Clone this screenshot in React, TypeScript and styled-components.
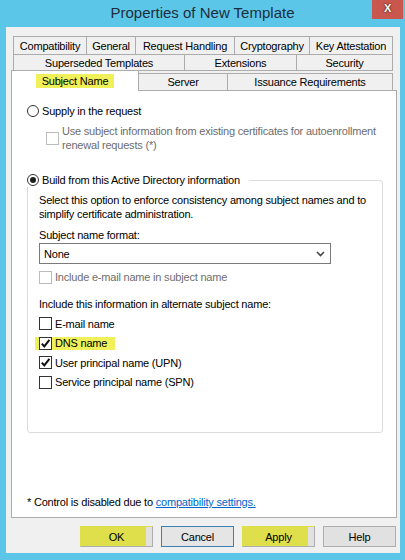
import React from "react";
import styled, { createGlobalStyle, css } from "styled-components";

const Global = createGlobalStyle`
  html, body { margin: 0; padding: 0; background: #5cc6e9; }
  body { font-family: "Liberation Sans", Arial, sans-serif; }
  * { box-sizing: border-box; }
`;

const HL_TEXT = "#f0f05a";
const HL_BTN = "#dfdf4c";

const Window = styled.div`
  width: 405px;
  height: 560px;
  background: #5cc6e9;
  display: flex;
  flex-direction: column;
  overflow: hidden;
  font-size: 11px;
  letter-spacing: -0.2px;
  color: #000;
`;

const TitleBar = styled.div`
  height: 27px;
  flex: none;
  display: grid;
  grid-template-columns: 1fr auto 1fr;
  align-items: start;
`;

const Title = styled.div`
  grid-column: 2;
  font-size: 15px;
  letter-spacing: 0;
  line-height: 25px;
  color: #1f2e3c;
  white-space: nowrap;
`;

const CloseButton = styled.div`
  grid-column: 3;
  justify-self: end;
  margin-right: 2px;
  width: 31px;
  height: 19px;
  background: #c9574d;
  color: #fff;
  font-weight: bold;
  font-size: 11px;
  display: flex;
  align-items: center;
  justify-content: center;
  padding-bottom: 3px;
  text-shadow: 0 0 2px #4a1510, 0 0 1px #4a1510;
`;

const Client = styled.div`
  flex: none;
  height: 526px;
  margin: 0 5px 0 6px;
  background: #f0f0f0;
  padding: 9px 3px 0 5px;
  display: flex;
  flex-direction: column;
`;

const TabRow = styled.div<{ $h: number; $front?: boolean }>`
  display: flex;
  align-items: flex-end;
  height: ${(p) => p.$h}px;
  margin-left: ${(p) => (p.$front ? 0 : 2)}px;
  & + & {
    margin-top: -1px;
  }
`;

const Tab = styled.div<{ $w: number; $h: number; $selected?: boolean; $open?: boolean }>`
  width: ${(p) => p.$w}px;
  height: ${(p) => p.$h}px;
  flex: none;
  border: 1px solid #acacac;
  background: #f0f0f0;
  display: flex;
  align-items: center;
  justify-content: center;
  white-space: nowrap;
  & + & {
    margin-left: -1px;
  }
  ${(p) =>
    p.$open &&
    css`
      border-bottom: none;
    `}
  ${(p) =>
    p.$selected &&
    css`
      position: relative;
      z-index: 1;
      background: #fff;
      border-bottom: none;
      margin-bottom: -1px;
      align-items: flex-start;
      padding-top: 3px;
    `}
`;

const Mark = styled.span`
  background: ${HL_TEXT};
  padding: 1px 6px;
  line-height: 12px;
`;

const Panel = styled.div`
  height: 428px;
  flex: none;
  background: #fff;
  border: 1px solid #acacac;
  padding: 13px 13px 8px 15px;
  display: flex;
  flex-direction: column;
`;

const OptionRow = styled.div`
  display: flex;
  align-items: center;
  height: 14px;
  gap: 3px;
  white-space: nowrap;
`;

const RadioCircle = styled.span<{ $checked?: boolean }>`
  width: 12px;
  height: 12px;
  flex: none;
  border-radius: 50%;
  border: 1px solid #333;
  background: #fff;
  display: flex;
  align-items: center;
  justify-content: center;
  &::after {
    content: "";
    width: 6px;
    height: 6px;
    border-radius: 50%;
    background: ${(p) => (p.$checked ? "#1e1e1e" : "transparent")};
  }
`;

const Box = styled.span<{ $disabled?: boolean }>`
  width: 13px;
  height: 13px;
  flex: none;
  border: 1px solid ${(p) => (p.$disabled ? "#bcbcbc" : "#333")};
  background: #fff;
  display: flex;
  align-items: center;
  justify-content: center;
`;

const SubOption = styled.div<{ $indent?: number }>`
  margin-top: 6px;
  margin-left: ${(p) => p.$indent ?? 0}px;
  display: flex;
  align-items: center;
  gap: 3px;
`;

const Dim = styled.span`
  color: #6d6d6d;
  line-height: 14px;
`;

const Group = styled.fieldset`
  margin: 21px 0 0 0;
  border: 1px solid #dcdcdc;
  border-radius: 3px;
  padding: 6px 12px 40px 11px;
  min-width: 0;
`;

const Legend = styled.legend`
  padding: 0 9px 0 0;
  margin-left: -12px;
  background: #fff;
`;

const Para = styled.div<{ $mt?: number }>`
  line-height: 14px;
  margin-top: ${(p) => p.$mt ?? 0}px;
`;

const Select = styled.div`
  margin-top: 1px;
  width: 292px;
  height: 21px;
  border: 1px solid #7a7a7a;
  background: #fff;
  display: flex;
  align-items: center;
  justify-content: space-between;
  padding: 0 5px 0 4px;
`;

const CheckRow = styled.div`
  display: flex;
  align-items: center;
  height: 19.5px;
`;

const CheckInner = styled.span<{ $highlight?: boolean }>`
  display: inline-flex;
  align-items: center;
  gap: 3px;
  height: 13px;
  white-space: nowrap;
  ${(p) =>
    p.$highlight &&
    css`
      background: ${HL_TEXT};
      margin-left: -4px;
      padding: 0 8px 0 4px;
    `}
`;

const CheckList = styled.div`
  margin-top: 3px;
  display: flex;
  flex-direction: column;
`;

const Footnote = styled.div`
  margin-top: auto;
  line-height: 14px;
  white-space: nowrap;
`;

const Link = styled.a`
  color: #0066cc;
  text-decoration: underline;
`;

const ButtonRow = styled.div`
  margin-top: 8px;
  margin-right: 1px;
  display: flex;
  justify-content: flex-end;
  gap: 8px;
`;

const Button = styled.div<{ $variant?: "hl" | "default" }>`
  width: 73px;
  height: 21px;
  border: 1px solid #adadad;
  background: #e1e1e1;
  display: flex;
  align-items: center;
  justify-content: center;
  ${(p) =>
    p.$variant === "hl" &&
    css`
      background: linear-gradient(to right, ${HL_BTN} 0, ${HL_BTN} 92%, #e1e1e1 92%);
      border-top-color: ${HL_BTN};
      border-left-color: ${HL_BTN};
    `}
  ${(p) =>
    p.$variant === "default" &&
    css`
      border-color: #3c7fb1;
      background: #e5e5e5;
    `}
`;

const Check = () => (
  <svg width="11" height="11" viewBox="0 0 11 11">
    <polyline points="1.8,5.6 4.3,8.4 9.4,1.9" fill="none" stroke="#111" strokeWidth="2" />
  </svg>
);

const Chevron = () => (
  <svg width="9" height="6" viewBox="0 0 9 6">
    <polyline points="1,1 4.5,4.5 8,1" fill="none" stroke="#444" strokeWidth="1.6" />
  </svg>
);

const CheckItem: React.FC<{ label: string; checked?: boolean; highlight?: boolean }> = ({
  label,
  checked,
  highlight,
}) => (
  <CheckRow>
    <CheckInner $highlight={highlight}>
      <Box>{checked && <Check />}</Box>
      <span>{label}</span>
    </CheckInner>
  </CheckRow>
);

export default function App() {
  return (
    <>
      <Global />
      <Window>
        <TitleBar>
          <Title>Properties of New Template</Title>
          <CloseButton>X</CloseButton>
        </TitleBar>
        <Client>
          <TabRow $h={19}>
            <Tab $w={74} $h={19}>Compatibility</Tab>
            <Tab $w={50} $h={19}>General</Tab>
            <Tab $w={100} $h={19}>Request Handling</Tab>
            <Tab $w={76} $h={19}>Cryptography</Tab>
            <Tab $w={84} $h={19}>Key Attestation</Tab>
          </TabRow>
          <TabRow $h={17}>
            <Tab $w={172} $h={17}>Superseded Templates</Tab>
            <Tab $w={113} $h={17}>Extensions</Tab>
            <Tab $w={97} $h={17}>Security</Tab>
          </TabRow>
          <TabRow $h={20} $front>
            <Tab $w={128} $h={21} $selected>
              <Mark>Subject Name</Mark>
            </Tab>
            <Tab $w={90} $h={17} $open>Server</Tab>
            <Tab $w={166} $h={17} $open>Issuance Requirements</Tab>
          </TabRow>
          <Panel>
            <OptionRow>
              <RadioCircle />
              <span>Supply in the request</span>
            </OptionRow>
            <SubOption $indent={19}>
              <Box $disabled />
              <Dim>
                Use subject information from existing certificates for autoenrollment
                <br />
                renewal requests (*)
              </Dim>
            </SubOption>
            <Group>
              <Legend>
                <OptionRow>
                  <RadioCircle $checked />
                  <span>Build from this Active Directory information</span>
                </OptionRow>
              </Legend>
              <Para>
                Select this option to enforce consistency among subject names and to
                <br />
                simplify certificate administration.
              </Para>
              <Para $mt={7}>Subject name format:</Para>
              <Select>
                <span>None</span>
                <Chevron />
              </Select>
              <SubOption>
                <Box $disabled />
                <Dim>Include e-mail name in subject name</Dim>
              </SubOption>
              <Para $mt={13}>Include this information in alternate subject name:</Para>
              <CheckList>
                <CheckItem label="E-mail name" />
                <CheckItem label="DNS name" checked highlight />
                <CheckItem label="User principal name (UPN)" checked />
                <CheckItem label="Service principal name (SPN)" />
              </CheckList>
            </Group>
            <Footnote>
              * Control is disabled due to <Link>compatibility settings.</Link>
            </Footnote>
          </Panel>
          <ButtonRow>
            <Button $variant="hl">OK</Button>
            <Button $variant="default">Cancel</Button>
            <Button $variant="hl">Apply</Button>
            <Button>Help</Button>
          </ButtonRow>
        </Client>
      </Window>
    </>
  );
}
